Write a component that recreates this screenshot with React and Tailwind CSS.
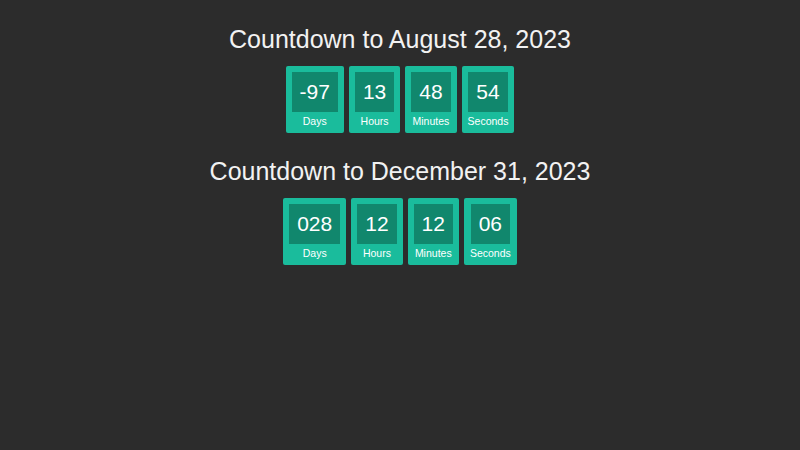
const countdowns = [
  { title: 'Countdown to August 28, 2023', parts: ['-97', '13', '48', '54'] },
  { title: 'Countdown to December 31, 2023', parts: ['028', '12', '12', '06'] },
];

const labels = ['Days', 'Hours', 'Minutes', 'Seconds'];

function TimeBox({ value, label }) {
  return (
    <div className="flex flex-col items-center rounded-[2px] bg-[#1abc9c] p-[6px]">
      <div className="bg-[#11876d] px-[8px] py-[8px] text-[21px] leading-[24px] text-white">{value}</div>
      <div className="mt-[3px] text-[10.5px] leading-[12px] text-white">{label}</div>
    </div>
  );
}

export default function App() {
  return (
    <div
      className="min-h-[450px] w-full bg-[#2c2c2c] pt-[24px] text-[#f2f2f2]"
      style={{ fontFamily: '"Liberation Sans", Arial, sans-serif' }}
    >
      {countdowns.map((c, i) => (
        <div key={c.title} className={i > 0 ? 'mt-[23px]' : ''}>
          <h1 className="text-center text-[25px] leading-[30px]">{c.title}</h1>
          <div className="mt-[12px] flex justify-center gap-[5px]">
            {c.parts.map((v, j) => (
              <TimeBox key={labels[j]} value={v} label={labels[j]} />
            ))}
          </div>
        </div>
      ))}
    </div>
  );
}
